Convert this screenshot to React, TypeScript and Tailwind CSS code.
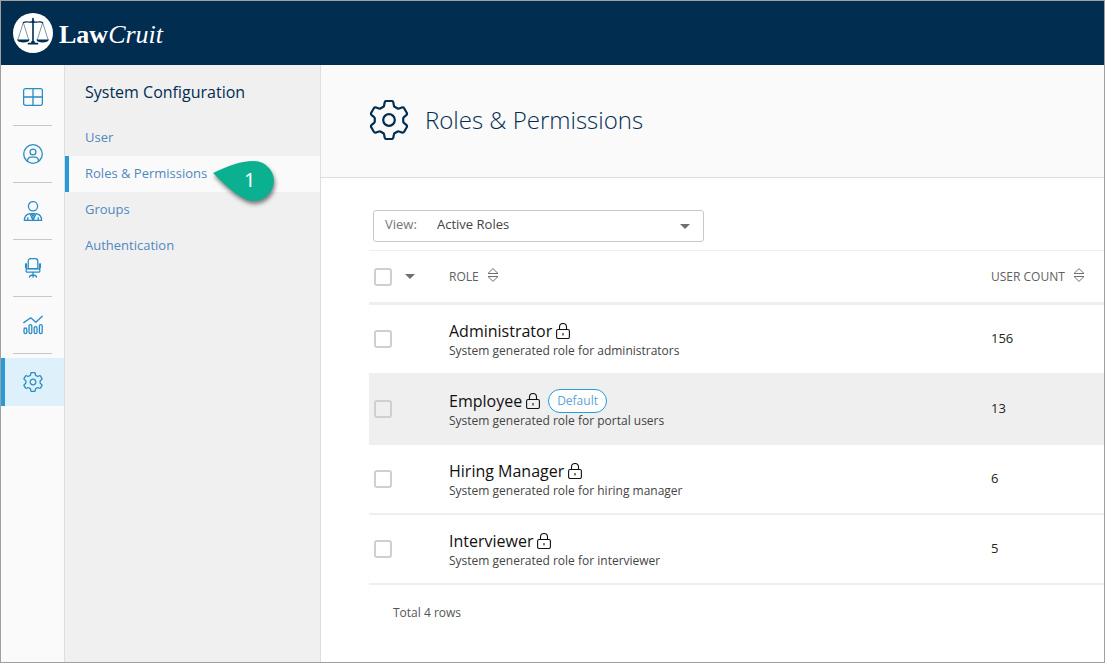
import { useState } from "react";
import type { ReactNode } from "react";

interface Role {
  id: number;
  name: string;
  description: string;
  userCount: number;
  isDefault?: boolean;
}

const roles: Role[] = [
  { id: 1, name: "Administrator", description: "System generated role for administrators", userCount: 156 },
  { id: 2, name: "Employee", description: "System generated role for portal users", userCount: 13, isDefault: true },
  { id: 3, name: "Hiring Manager", description: "System generated role for hiring manager", userCount: 6 },
  { id: 4, name: "Interviewer", description: "System generated role for interviewer", userCount: 5 },
];

const menuItems = ["User", "Roles & Permissions", "Groups", "Authentication"];

// One tooth of the gear, pointing up; the outline is six of them around 0,0
const tooth = [
  [-5.6, -13.2], [-5, -13.6], [-4.9, -14.4],
  [-4.4, -17.4], [-4.1, -19], [-2.6, -19],
  [2.6, -19], [4.1, -19], [4.4, -17.4],
  [4.9, -14.4], [5, -13.6], [5.6, -13.2],
];

const gearPath =
  [0, 1, 2, 3, 4, 5]
    .map((n) => {
      const a = (n * Math.PI) / 3;
      const p = tooth.map(
        ([x, y]) => `${(x * Math.cos(a) - y * Math.sin(a)).toFixed(2)} ${(x * Math.sin(a) + y * Math.cos(a)).toFixed(2)}`
      );
      return `${n === 0 ? "M" : "L"}${p[0]} Q${p[1]} ${p[2]} L${p[3]} Q${p[4]} ${p[5]} L${p[6]} Q${p[7]} ${p[8]} L${p[9]} Q${p[10]} ${p[11]}`;
    })
    .join(" ") + " Z";

function GearIcon({ className, strokeWidth }: { className: string; strokeWidth: number }) {
  return (
    <svg viewBox="-20 -20 40 40" className={className} fill="none" stroke="currentColor" strokeWidth={strokeWidth} strokeLinejoin="round" aria-hidden="true">
      <path d={gearPath} />
      <circle r="5.8" />
    </svg>
  );
}

function RailIcon({ children }: { children: ReactNode }) {
  return (
    <svg viewBox="0 0 20 20" className="size-5" fill="none" stroke="currentColor" strokeWidth="1.3" strokeLinecap="round" strokeLinejoin="round" aria-hidden="true">
      {children}
    </svg>
  );
}

const railItems = [
  {
    label: "Dashboard",
    icon: (
      <RailIcon>
        <rect x="0.6" y="1.6" width="18.8" height="16.8" rx="2" />
        <path d="M10 1.6v16.8M.6 10h18.8" />
      </RailIcon>
    ),
  },
  {
    label: "Profile",
    icon: (
      <RailIcon>
        <circle cx="10" cy="10" r="9.3" />
        <circle cx="10" cy="8" r="2.9" />
        <path d="M4.4 17.2c.2-2.6 1.6-4 3.6-4h4c2 0 3.4 1.4 3.6 4" />
      </RailIcon>
    ),
  },
  {
    label: "Candidates",
    icon: (
      <RailIcon>
        <circle cx="10" cy="5.2" r="4.6" />
        <path d="M1.4 19.4c0-4.200 2-6.300 5.600-6.800l3 6.800 3-6.800c3.600.5 5.600 2.600 5.600 6.800z" />
        <path d="M8.400 12.600h3.200L10 15.400zM10 15v4M4.800 16.600v2.600M15.200 16.600v2.600" />
      </RailIcon>
    ),
  },
  {
    label: "Interviews",
    icon: (
      <RailIcon>
        <path d="M5.200 10.600V3.400c0-1.700 1-2.800 2.800-2.800h4c1.800 0 2.800 1.100 2.800 2.800v7.200z" />
        <path d="M3.200 10.800h13.600v2.400c0 .6-.4 1-1 1H4.200c-.6 0-1-.4-1-1z" />
        <path d="M3.400 10.600V6H2.600v3.400M16.600 10.600V6h.8v3.400M10 14.400v4.800M6.400 19.200c.4-1.600 1.600-2.200 3.600-2.200s3.200.6 3.600 2.200" />
      </RailIcon>
    ),
  },
  {
    label: "Reports",
    icon: (
      <RailIcon>
        <path d="M.8 7.600l7-4.800 5 4.400 6.400-6" />
        <rect x="1" y="13" width="2.800" height="5.600" rx="1.400" />
        <rect x="6" y="9.600" width="2.800" height="9" rx="1.400" />
        <rect x="11.200" y="11.600" width="2.800" height="7" rx="1.400" />
        <rect x="16.400" y="9.600" width="2.800" height="9" rx="1.400" />
      </RailIcon>
    ),
  },
  { label: "Settings", icon: <GearIcon className="size-5" strokeWidth={2.6} /> },
];

function Logo() {
  return (
    <a href="#" aria-label="LawCruit" className="flex items-center gap-1.5 text-white">
      <svg viewBox="0 0 40 40" className="size-10 shrink-0" aria-hidden="true">
        <circle cx="20" cy="20" r="20" fill="#fff" />
        <g fill="none" stroke="#012d51" strokeLinecap="round">
          <path d="M20 5.500v24.500" strokeWidth="1.600" />
          <path d="M10.500 9.500c3-2 6 .8 9.500-.8 3.500 1.600 6.500-1.200 9.500.8" strokeWidth="1.200" />
          <path d="M10.300 9.500L5 26.500M10.300 9.500l5.300 17M29.700 9.500l-5.300 17M29.700 9.500L35 26.500" strokeWidth=".5" />
        </g>
        <g fill="#012d51">
          <path d="M4 26.500h12.800c-.8 2.200-3 3-6.400 3S4.800 28.700 4 26.500zM23.200 26.500H36c-.8 2.200-3 3-6.400 3s-5.600-.8-6.400-3z" />
          <path d="M18.600 28h2.800l.6 1.800h3.200V31.500H14.800v-1.700H18z" />
          <circle cx="20" cy="8.600" r="1.500" />
        </g>
      </svg>
      <span className="pt-1 font-['Liberation_Serif',serif] text-[26px] leading-8">
        <b>Law</b>
        <i>Cruit</i>
      </span>
    </a>
  );
}

function SortIcon() {
  return (
    <svg viewBox="0 0 12 14" className="mb-1 h-3.5 w-3" fill="none" stroke="#707070" strokeLinejoin="round" aria-hidden="true">
      <path d="M1 5.500L6 .6l5 4.900zM1 8.500l5 4.900 5-4.900z" />
    </svg>
  );
}

function CaretIcon() {
  return (
    <svg viewBox="0 0 10 5" className="h-[5px] w-2.5" fill="#707070" aria-hidden="true">
      <path d="M0 0h10L5 5z" />
    </svg>
  );
}

function LockIcon() {
  return (
    <svg viewBox="0 0 14 16" className="h-4 w-3.5" fill="none" stroke="#111" strokeWidth="1.100" role="img" aria-label="Locked">
      <rect x=".6" y="6.500" width="12.800" height="9" rx="1.500" />
      <path d="M3.500 6.500V4a3.500 3.500 0 0 1 7 0v2.500M7 10v2.500" />
    </svg>
  );
}

function Checkbox({ label }: { label: string }) {
  return (
    <input
      type="checkbox"
      aria-label={label}
      className="block size-[18px] appearance-none rounded-[3px] border-2 border-[#cfcfcf] checked:border-[#259bd7] checked:bg-[#259bd7]"
    />
  );
}

function StepMarker() {
  return (
    <span className="absolute -top-1 left-[147px] z-10 flex h-14 w-16 items-start">
      <svg viewBox="0 0 64 56" className="absolute inset-0 drop-shadow-[1px_3px_2px_rgba(0,0,0,0.5)]" aria-hidden="true">
        <path d="M1 21C16 14 27 9 42 9a20 20 0 1 1-9 37.900C21 41 12 32 1 21z" fill="#0bb091" />
      </svg>
      <span className="relative mt-4 ml-8 font-['Noto_Sans',sans-serif] text-xl leading-6 text-white">1</span>
    </span>
  );
}

export default function App() {
  const [active, setActive] = useState("Roles & Permissions");
  const [view, setView] = useState("Active Roles");

  return (
    <div className="flex min-h-screen flex-col border border-[#a0a0a0] bg-white font-['Open_Sans',sans-serif] text-[#222]">
      <header className="flex h-16 items-center bg-[#012d51] px-3">
        <Logo />
      </header>

      <div className="flex flex-1">
        <nav aria-label="Main" className="w-16 shrink-0 border-r border-[#dedede] bg-[#fafafa] pt-2 text-[#2a8dc5]">
          <ul>
            {railItems.map((item) => (
              <li key={item.label} className="group">
                <a
                  href="#"
                  aria-label={item.label}
                  className={`flex h-12 items-center justify-center ${
                    item.label === "Settings" ? "border-l-4 border-[#259bd7] bg-[#def0fa] pr-1" : ""
                  }`}
                >
                  {item.icon}
                </a>
                <div className="mx-3 my-1 h-px bg-[#c8c8c8] group-last:hidden" />
              </li>
            ))}
          </ul>
        </nav>

        <aside className="w-64 shrink-0 border-r border-[#dedede] bg-[#f0f0f0]">
          <h2 className="mt-[15px] mb-4 pl-5 text-base leading-6 text-[#012d51]">System Configuration</h2>
          <ul>
            {menuItems.map((item) => (
              <li key={item} className="relative">
                <a
                  href="#"
                  onClick={() => setActive(item)}
                  className={`flex h-9 items-center border-l-4 pl-4 text-[13px] text-[#5088bf] ${
                    active === item ? "border-[#259bd7] bg-[#fafafa]" : "border-transparent"
                  }`}
                >
                  {item}
                </a>
                {item === "Roles & Permissions" && <StepMarker />}
              </li>
            ))}
          </ul>
        </aside>

        <main className="min-w-0 flex-1">
          <div className="flex h-[113px] items-center gap-4 border-b border-[#dedede] bg-[#fafafa] px-12 pb-0.5 text-[#012d51]">
            <GearIcon className="size-10" strokeWidth={2.2} />
            <h1 className="text-2xl font-light">Roles &amp; Permissions</h1>
          </div>

          <div className="pt-8 pl-12">
            <div className="relative ml-1 flex h-8 w-[331px] items-center rounded-[3px] border border-[#c8c8c8] text-[13px]">
              <label htmlFor="view" className="w-[63px] pb-0.5 pl-[11px] text-[#757575]">View:</label>
              <select
                id="view"
                value={view}
                onChange={(e) => setView(e.target.value)}
                className="h-full flex-1 appearance-none bg-transparent pb-0.5 text-[#444] outline-none"
              >
                <option>Active Roles</option>
                <option>Inactive Roles</option>
              </select>
              <span className="pointer-events-none absolute right-[13px]">
                <CaretIcon />
              </span>
            </div>

            <table className="mt-2 w-full border-collapse border-t border-[#efefef] text-left">
              <thead>
                <tr className="h-[53px] border-b-3 border-[#efefef] text-xs text-[#606060]">
                  <th className="w-20 pl-[5px] font-normal">
                    <div className="flex items-center gap-[13px]">
                      <Checkbox label="Select all roles" />
                      <button type="button" aria-label="Selection options">
                        <CaretIcon />
                      </button>
                    </div>
                  </th>
                  <th className="font-normal">
                    <button type="button" className="flex items-center gap-2">
                      ROLE <SortIcon />
                    </button>
                  </th>
                  <th className="w-[113px] font-normal">
                    <button type="button" className="flex items-center gap-2 whitespace-nowrap">
                      USER COUNT <SortIcon />
                    </button>
                  </th>
                </tr>
              </thead>
              <tbody>
                {roles.map((role) => (
                  <tr key={role.id} className={`h-[70px] border-b-2 border-[#efefef] ${role.isDefault ? "bg-[#efefef]" : ""}`}>
                    <td className="pl-[5px]">
                      <Checkbox label={`Select ${role.name}`} />
                    </td>
                    <td>
                      <div className="flex h-6 items-center gap-1">
                        <span className="text-base text-[#111]">{role.name}</span>
                        <LockIcon />
                        {role.isDefault && (
                          <span className="ml-1 flex h-6 items-center rounded-full border border-[#259bd7] bg-white px-2 text-xs text-[#5da3d3]">
                            Default
                          </span>
                        )}
                      </div>
                      <p className="text-xs leading-4 text-[#444]">{role.description}</p>
                    </td>
                    <td className="text-[13px]">{role.userCount}</td>
                  </tr>
                ))}
              </tbody>
            </table>

            <p className="mt-5 pl-6 text-xs text-[#555]">Total {roles.length} rows</p>
          </div>
        </main>
      </div>
    </div>
  );
}
